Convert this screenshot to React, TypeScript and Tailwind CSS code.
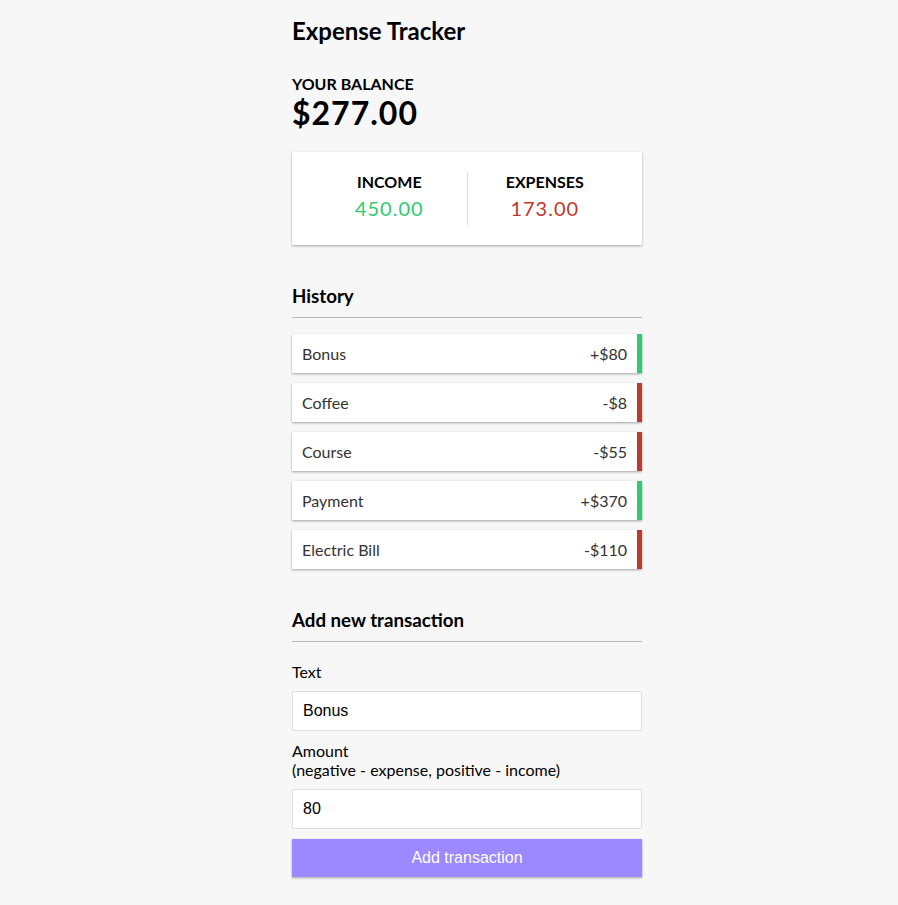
import { useState } from "react"

type Tx = { id: number; text: string; amount: number }

const initial: Tx[] = [
  { id: 1, text: "Bonus", amount: 80 },
  { id: 2, text: "Coffee", amount: -8 },
  { id: 3, text: "Course", amount: -55 },
  { id: 4, text: "Payment", amount: 370 },
  { id: 5, text: "Electric Bill", amount: -110 },
]

const shadow = "shadow-[0_1px_3px_rgba(0,0,0,0.12),0_1px_2px_rgba(0,0,0,0.24)]"

export default function App() {
  const [transactions] = useState<Tx[]>(initial)
  const [text, setText] = useState("Bonus")
  const [amount, setAmount] = useState("80")

  const income = 450
  const expense = 173
  const total = 277

  return (
    <div className="min-h-screen bg-[#f7f7f7] flex justify-center pl-[36px] font-['Lato',sans-serif] text-black">
      <div className="w-[350px]">
        <h2 className="mt-[16px] mb-[29px] text-[24px] leading-[29px] font-bold">Expense Tracker</h2>

        <h4 className="text-[16px] leading-[19px] font-bold uppercase">Your Balance</h4>
        <h1 className="text-[32px] leading-[39px] font-bold tracking-[1px]">${total.toFixed(2)}</h1>

        <div className={`bg-white ${shadow} p-5 flex justify-between my-5`}>
          <div className="flex-1 text-center border-r border-[#dedede]">
            <h4 className="text-[16px] leading-[19px] font-bold uppercase">Income</h4>
            <p className="text-[20px] leading-[24px] tracking-[1px] my-[5px] text-[#2ecc71]">{income.toFixed(2)}</p>
          </div>
          <div className="flex-1 text-center">
            <h4 className="text-[16px] leading-[19px] font-bold uppercase">Expenses</h4>
            <p className="text-[20px] leading-[24px] tracking-[1px] my-[5px] text-[#c0392b]">{expense.toFixed(2)}</p>
          </div>
        </div>

        <h3 className="mt-10 border-b border-[#bbb] pb-[10px] text-[18.72px] leading-[22px] font-bold">History</h3>
        <ul className="mt-4 mb-10">
          {transactions.map((t) => (
            <li
              key={t.id}
              className={`bg-white ${shadow} text-[#333] flex justify-between p-[10px] mt-[10px] text-[16px] leading-[19px] border-r-[5px] ${
                t.amount < 0 ? "border-[#c0392b]" : "border-[#2ecc71]"
              }`}
            >
              <span>{t.text}</span>
              <span>
                {t.amount < 0 ? "-" : "+"}${Math.abs(t.amount)}
              </span>
            </li>
          ))}
        </ul>

        <h3 className="border-b border-[#bbb] pb-[10px] text-[18.72px] leading-[22px] font-bold">Add new transaction</h3>
        <form onSubmit={(e) => e.preventDefault()} className="mt-[10px]">
          <div>
            <label className="inline-block my-[10px] text-[16px] leading-[19px]">Text</label>
            <input
              type="text"
              value={text}
              onChange={(e) => setText(e.target.value)}
              placeholder="Enter text..."
              className="block w-full bg-white border border-[#dedede] rounded-[2px] p-[10px] text-[16px] leading-[18px] font-['Liberation_Sans',Arial,sans-serif] outline-none"
            />
          </div>
          <div>
            <label className="inline-block my-[10px] text-[16px] leading-[19px]">
              Amount <br />
              (negative - expense, positive - income)
            </label>
            <input
              type="number"
              value={amount}
              onChange={(e) => setAmount(e.target.value)}
              placeholder="Enter amount..."
              className="block w-full bg-white border border-[#dedede] rounded-[2px] p-[10px] text-[16px] leading-[18px] font-['Liberation_Sans',Arial,sans-serif] outline-none [appearance:textfield]"
            />
          </div>
          <button
            className={`block w-full bg-[#9c88ff] ${shadow} text-white border-0 text-[16px] leading-[18px] mt-[10px] mb-[30px] p-[10px] font-['Liberation_Sans',Arial,sans-serif] cursor-pointer`}
          >
            Add transaction
          </button>
        </form>
      </div>
    </div>
  )
}
